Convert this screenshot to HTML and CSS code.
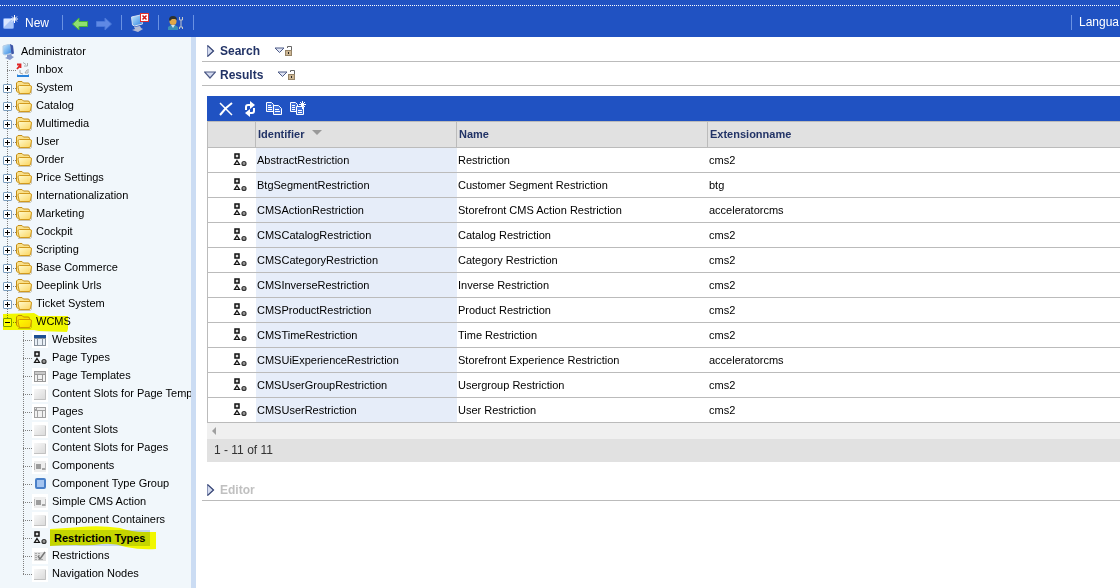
FILE: index.html
```html
<!DOCTYPE html>
<html lang="en">
  <head>
    <meta charset="UTF-8" />
    <meta name="viewport" content="width=device-width, initial-scale=1.0" />
    <title>Restriction Types</title>
    <link rel="stylesheet" href="styles.css">
  </head>
  <body>
    <!-- shared icons -->
    <svg class="sprite" aria-hidden="true">
      <defs>
        <linearGradient id="gold" x1="0" y1="0" x2="1" y2="1">
          <stop offset="0" stop-color="#fffbd0" />
          <stop offset="1" stop-color="#fbd45c" />
        </linearGradient>
        <linearGradient id="silver" x1="0" y1="0" x2="1" y2="1">
          <stop offset="0" stop-color="#f8f8f8" />
          <stop offset="1" stop-color="#d8d8d8" />
        </linearGradient>
        <linearGradient id="screen" x1="0" y1="0" x2="1" y2="1">
          <stop offset="0" stop-color="#c8ecff" />
          <stop offset="1" stop-color="#2b7fe0" />
        </linearGradient>
        <symbol id="folder" viewBox="0 0 16 16">
          <path d="M2 14.500h12.500l1-1V6" fill="none" stroke="#c9c4b4" />
          <path d="M.5 11V3l1.500-1.500h4L7.500 3H12q1.500 0 1.500 1.500V12l-1 1.500H3z" fill="#f9e08a" stroke="#c48d14" />
          <path d="M3.500 5.500H14q1.500 0 1.500 1.500l-1 5q0 1.500-1.500 1.500H4.500q-1.500 0-1.500-1.500l-1-5q0-1.500 1.500-1.500z" fill="url(#gold)" stroke="#d29a1c" />
        </symbol>
        <symbol id="types" viewBox="0 0 16 16">
          <rect x="3" y="2" width="4" height="4" fill="#ddd" stroke="#111" stroke-width="1.500" />
          <path d="M5 8.500L7.500 12.500h-5z" fill="#ddd" stroke="#111" stroke-width="1.200" />
          <circle cx="12" cy="11.500" r="2" fill="#999" stroke="#333" stroke-width="1.200" />
        </symbol>
        <symbol id="slot" viewBox="0 0 16 16">
          <rect width="16" height="16" fill="#fff" />
          <rect x="2" y="3" width="12" height="11" fill="url(#silver)" />
          <path d="M2 13.500h11.500V4" fill="none" stroke="#c2c2c2" />
        </symbol>
        <symbol id="website" viewBox="0 0 16 16">
          <rect width="16" height="16" fill="#fff" />
          <rect x="2" y="3" width="12" height="11" fill="#8b949e" />
          <rect x="2" y="3" width="12" height="3" fill="#1d4f93" />
          <path d="M3 7h2v6H3zM6 7h4v6H6zM11 7h2v6h-2z" fill="#eaf0f6" />
        </symbol>
        <symbol id="template" viewBox="0 0 16 16">
          <rect width="16" height="16" fill="#fff" />
          <rect x="2" y="3" width="12" height="11" fill="#9a9a9a" />
          <path d="M3 4h10v2H3z" fill="#c8c8c8" />
          <path d="M3 7h2v6H3zM6 7h4v4H6zM11 7h2v6h-2zM6 12h4v1H6z" fill="#f2f2f2" />
        </symbol>
        <symbol id="page" viewBox="0 0 16 16">
          <rect width="16" height="16" fill="#fff" />
          <rect x="2" y="3" width="12" height="11" fill="#a2a2a2" />
          <path d="M3 4h1v1H3zM5 4h8v2H5z" fill="#ececec" />
          <path d="M3 7h2v6H3zM6 7h4v6H6zM11 7h2v6h-2z" fill="#f2f2f2" />
        </symbol>
        <symbol id="component" viewBox="0 0 16 16">
          <rect width="16" height="16" fill="#fff" />
          <path d="M2 3h12v11H2z" fill="#eee" />
          <path d="M2.500 5v7M13.500 5v7" stroke="#bbb" />
          <path d="M4 6h5v5H4z" fill="#9c9c9c" />
          <path d="M10 10h3v2h-3z" fill="#a5a5a5" />
        </symbol>
        <symbol id="group" viewBox="0 0 16 16">
          <rect x="4" y="3" width="9" height="9" rx="1" fill="#a4c4f0" stroke="#4a80c8" stroke-width="2" />
        </symbol>
        <symbol id="rule" viewBox="0 0 16 16">
          <rect width="16" height="16" fill="#fff" />
          <rect x="2" y="4" width="12" height="9" fill="#e0e0e0" />
          <path d="M3 5.500h6M3 7.500h5M3 9.500h3M3 11.500h9" stroke="#aaa" stroke-dasharray="2 1" />
          <path d="M6 8l2 3 5-7" fill="none" stroke="#777" stroke-width="1.500" />
        </symbol>
        <symbol id="computer" viewBox="0 0 16 16">
          <path d="M2 2l7-2 2 9-7 2-2-1z" fill="url(#screen)" stroke="#b4cbe4" />
          <path d="M9 0l3 1.500 1 8-2.500 1z" fill="#3c55a8" />
          <path d="M6 11l4-1 1 2 2 1-4 3-5-2 2-1z" fill="#8298cc" />
        </symbol>
        <symbol id="right" viewBox="0 0 8 14">
          <path d="M.5 1.500v11L6.500 7z" fill="#d5dcf0" stroke="#8a95b8" />
          <path d="M.5 1.500L6.500 7l-6 5.500" fill="none" stroke="#3b4978" stroke-width="1.200" />
        </symbol>
        <symbol id="down" viewBox="0 0 12 8">
          <path d="M.5 1h11L6 7z" fill="#d5dcf0" stroke="#4d5a86" stroke-width="1.200" />
        </symbol>
        <symbol id="lock" viewBox="0 0 20 12">
          <path d="M1 3h9L5.500 7.500z" fill="#dfe4f4" stroke="#4d5a86" />
          <path d="M13.500 3V1.500h4v4" fill="none" stroke="#666" />
          <rect x="11.500" y="5.500" width="6" height="5" fill="#cdb794" stroke="#968468" />
          <path d="M14.500 7v2" stroke="#222" />
        </symbol>
      </defs>
    </svg>

    <header class="topbar">
      <button class="new" type="button">
        <svg width="16" height="16" viewBox="0 0 16 16" aria-hidden="true">
          <rect x="1.500" y="3.500" width="10" height="10" rx="1" fill="#a9c5f7" stroke="#7fa5f2" />
          <path d="M2 4h8L2 12z" fill="#dbe7ff" />
          <path d="M12.500 0v8M9 4h7M10 1.500l5 5M15 1.500l-5 5" stroke="#fff" />
        </svg>
        New
      </button>
      <span class="sep"></span>
      <button type="button" aria-label="Back">
        <svg width="16" height="16" viewBox="0 0 16 16" aria-hidden="true">
          <path d="M.5 9L7 3v3.500h8.500v5H7V15z" fill="#8fe070" stroke="#46b33a" />
        </svg>
      </button>
      <button type="button" aria-label="Forward">
        <svg width="16" height="16" viewBox="0 0 16 16" aria-hidden="true">
          <path d="M15.500 9L9 3v3.500H.5v5H9V15z" fill="#5f89e4" stroke="#4a78da" />
        </svg>
      </button>
      <span class="sep"></span>
      <button type="button" aria-label="Close session">
        <svg width="18" height="20" viewBox="1 0 18 20" aria-hidden="true">
          <path d="M1.500 4l9-2 2 9-8 2-2-1z" fill="url(#screen)" stroke="#d5dfef" />
          <path d="M4 14l6-1 1 2 2 1-5 3-6-2 3-1z" fill="#b4bbd4" />
          <rect x="10.500" y=".5" width="8" height="8" fill="#fff" stroke="#e03030" />
          <path d="M12.500 2.500l4 4M16.500 2.500l-4 4" stroke="#d01818" stroke-width="1.500" />
        </svg>
      </button>
      <span class="sep"></span>
      <button type="button" aria-label="User settings">
        <svg width="16" height="18" viewBox="0 0 16 18" aria-hidden="true">
          <path d="M0 16v-3l3-2h4l3 2v3z" fill="#3a8fb8" />
          <path d="M3 11l2 3 2-3z" fill="#cfe4ee" />
          <circle cx="5" cy="7.500" r="3.500" fill="#e0a848" />
          <path d="M1 6q0-4 4-4t4 4L7 5H4L2 7z" fill="#2b3130" />
          <path d="M11.500 3v3h3V3M13 6v7M11.500 15v-2h3v2" fill="none" stroke="#c4c8ca" />
        </svg>
      </button>
      <span class="sep"></span>
      <div class="language">Langua</div>
    </header>

    <div class="layout">
      <nav class="sidebar">
        <ul class="tree">
          <li class="root"><svg class="icon"><use href="#computer" /></svg><a href="#">Administrator</a></li>
          <li class="row">
            <span class="branch"></span>
            <svg class="icon" viewBox="0 0 16 16">
              <path d="M1 12v3h12v-3l-1 1H2z" fill="#2a84dc" />
              <path d="M1 7l3-3.500M1 2.500h3.500V6" fill="none" stroke="#df2525" stroke-width="1.800" />
              <path d="M7 .5l3 2M11.500 1v3H8M4 8v3l3 1M12 7v4H9l2-3" fill="none" stroke="#aaa" />
            </svg>
            <a href="#">Inbox</a>
          </li>
          <li class="row"><span class="branch"><button class="toggle plus" aria-label="Open System"></button></span><svg class="icon"><use href="#folder" /></svg><a href="#">System</a></li>
          <li class="row"><span class="branch"><button class="toggle plus" aria-label="Open Catalog"></button></span><svg class="icon"><use href="#folder" /></svg><a href="#">Catalog</a></li>
          <li class="row"><span class="branch"><button class="toggle plus" aria-label="Open Multimedia"></button></span><svg class="icon"><use href="#folder" /></svg><a href="#">Multimedia</a></li>
          <li class="row"><span class="branch"><button class="toggle plus" aria-label="Open User"></button></span><svg class="icon"><use href="#folder" /></svg><a href="#">User</a></li>
          <li class="row"><span class="branch"><button class="toggle plus" aria-label="Open Order"></button></span><svg class="icon"><use href="#folder" /></svg><a href="#">Order</a></li>
          <li class="row"><span class="branch"><button class="toggle plus" aria-label="Open Price Settings"></button></span><svg class="icon"><use href="#folder" /></svg><a href="#">Price Settings</a></li>
          <li class="row"><span class="branch"><button class="toggle plus" aria-label="Open Internationalization"></button></span><svg class="icon"><use href="#folder" /></svg><a href="#">Internationalization</a></li>
          <li class="row"><span class="branch"><button class="toggle plus" aria-label="Open Marketing"></button></span><svg class="icon"><use href="#folder" /></svg><a href="#">Marketing</a></li>
          <li class="row"><span class="branch"><button class="toggle plus" aria-label="Open Cockpit"></button></span><svg class="icon"><use href="#folder" /></svg><a href="#">Cockpit</a></li>
          <li class="row"><span class="branch"><button class="toggle plus" aria-label="Open Scripting"></button></span><svg class="icon"><use href="#folder" /></svg><a href="#">Scripting</a></li>
          <li class="row"><span class="branch"><button class="toggle plus" aria-label="Open Base Commerce"></button></span><svg class="icon"><use href="#folder" /></svg><a href="#">Base Commerce</a></li>
          <li class="row"><span class="branch"><button class="toggle plus" aria-label="Open Deeplink Urls"></button></span><svg class="icon"><use href="#folder" /></svg><a href="#">Deeplink Urls</a></li>
          <li class="row"><span class="branch"><button class="toggle plus" aria-label="Open Ticket System"></button></span><svg class="icon"><use href="#folder" /></svg><a href="#">Ticket System</a></li>
          <li>
            <div class="row">
              <span class="branch last"><button class="toggle" aria-label="Close WCMS"></button></span><svg class="icon"><use href="#folder" /></svg><a href="#">WCMS</a>
              <svg class="marker marker-wcms" viewBox="0 0 66 20" aria-hidden="true"><path d="M0 1l31-1 5 3h29v13l-1 3-28-1-5-1H0z" fill="#ff0" /></svg>
            </div>
            <ul class="tree sub">
              <li class="row"><span class="branch"></span><svg class="icon"><use href="#website" /></svg><a href="#">Websites</a></li>
              <li class="row"><span class="branch"></span><svg class="icon"><use href="#types" /></svg><a href="#">Page Types</a></li>
              <li class="row"><span class="branch"></span><svg class="icon"><use href="#template" /></svg><a href="#">Page Templates</a></li>
              <li class="row"><span class="branch"></span><svg class="icon"><use href="#slot" /></svg><a href="#">Content Slots for Page Temp</a></li>
              <li class="row"><span class="branch"></span><svg class="icon"><use href="#page" /></svg><a href="#">Pages</a></li>
              <li class="row"><span class="branch"></span><svg class="icon"><use href="#slot" /></svg><a href="#">Content Slots</a></li>
              <li class="row"><span class="branch"></span><svg class="icon"><use href="#slot" /></svg><a href="#">Content Slots for Pages</a></li>
              <li class="row"><span class="branch"></span><svg class="icon"><use href="#component" /></svg><a href="#">Components</a></li>
              <li class="row"><span class="branch"></span><svg class="icon"><use href="#group" /></svg><a href="#">Component Type Group</a></li>
              <li class="row"><span class="branch"></span><svg class="icon"><use href="#component" /></svg><a href="#">Simple CMS Action</a></li>
              <li class="row"><span class="branch"></span><svg class="icon"><use href="#slot" /></svg><a href="#">Component Containers</a></li>
              <li class="row">
                <span class="branch"></span><svg class="icon"><use href="#types" /></svg><a class="selected" href="#">Restriction Types</a>
                <svg class="marker marker-types" viewBox="0 0 106 24" aria-hidden="true"><path d="M0 3q18-1 30-2 20-2 40 1 12 4 24 4h12v17q-15 1-30-2-12-4-24-3-12 2-26 1-14 0-26 1z" fill="#ff0" /></svg>
              </li>
              <li class="row"><span class="branch"></span><svg class="icon"><use href="#rule" /></svg><a href="#">Restrictions</a></li>
              <li class="row"><span class="branch last"></span><svg class="icon"><use href="#slot" /></svg><a href="#">Navigation Nodes</a></li>
            </ul>
          </li>
        </ul>
      </nav>

      <main class="content">
        <h2 class="section">
          <svg class="arrow" width="16" height="14"><use href="#right" width="8" height="14" x="5" /></svg>Search
          <svg class="lock" width="20" height="12"><use href="#lock" /></svg>
        </h2>
        <h2 class="section">
          <svg class="arrow" width="16" height="14"><use href="#down" width="12" height="8" x="2" y="3" /></svg>Results
          <svg class="lock" width="20" height="12"><use href="#lock" /></svg>
        </h2>

        <div class="results">
          <div class="actions">
            <button type="button" aria-label="Delete">
              <svg width="16" height="16" viewBox="0 0 16 16"><path d="M2 2l6 6 6 6" fill="none" stroke="#fff" stroke-width="1.500" /><path d="M14 2L8 7l-6 7" fill="none" stroke="#fff" stroke-width="2" /></svg>
            </button>
            <button type="button" aria-label="Refresh">
              <svg width="16" height="16" viewBox="0 0 16 16"><path d="M4 9V6q0-2 2-2h3M12 7v3q0 2-2 2H7" fill="none" stroke="#fff" stroke-width="2" /><path d="M8 0l5 4-5 4zM8 8l-5 4 5 4z" fill="#fff" /></svg>
            </button>
            <button type="button" aria-label="Copy">
              <svg width="16" height="16" viewBox="0 0 16 16"><g fill="#3f6fd8" stroke="#fff"><path d="M.5 1.500h5l2 2v7h-7z" /><path d="M7.500 4.500h5l3 3v6h-8z" /><path d="M2 4.500h3M2 6.500h4M2 8.500h4M9 8.500h4M9 10.500h5" /></g></svg>
            </button>
            <button type="button" aria-label="Copy as new">
              <svg width="16" height="16" viewBox="0 0 16 16"><g fill="#3f6fd8" stroke="#fff"><path d="M.5 1.500h5l2 2v7h-7z" /><path d="M6.500 5.500h7v8h-7z" /><path d="M2 4.500h3M2 6.500h3M2 8.500h3M8 9.500h4M8 11.500h4M12.500 0v8M9 3.500h7M10 1l5 5M15 1l-5 5" /></g></svg>
            </button>
          </div>
          <table class="grid">
            <thead>
              <tr>
                <th class="col-icon"></th>
                <th class="col-id">Identifier <span class="sort"></span></th>
                <th class="col-name">Name</th>
                <th>Extensionname</th>
              </tr>
            </thead>
            <tbody>
              <tr><td><svg class="icon"><use href="#types" /></svg></td><td>AbstractRestriction</td><td>Restriction</td><td>cms2</td></tr>
              <tr><td><svg class="icon"><use href="#types" /></svg></td><td>BtgSegmentRestriction</td><td>Customer Segment Restriction</td><td>btg</td></tr>
              <tr><td><svg class="icon"><use href="#types" /></svg></td><td>CMSActionRestriction</td><td>Storefront CMS Action Restriction</td><td>acceleratorcms</td></tr>
              <tr><td><svg class="icon"><use href="#types" /></svg></td><td>CMSCatalogRestriction</td><td>Catalog Restriction</td><td>cms2</td></tr>
              <tr><td><svg class="icon"><use href="#types" /></svg></td><td>CMSCategoryRestriction</td><td>Category Restriction</td><td>cms2</td></tr>
              <tr><td><svg class="icon"><use href="#types" /></svg></td><td>CMSInverseRestriction</td><td>Inverse Restriction</td><td>cms2</td></tr>
              <tr><td><svg class="icon"><use href="#types" /></svg></td><td>CMSProductRestriction</td><td>Product Restriction</td><td>cms2</td></tr>
              <tr><td><svg class="icon"><use href="#types" /></svg></td><td>CMSTimeRestriction</td><td>Time Restriction</td><td>cms2</td></tr>
              <tr><td><svg class="icon"><use href="#types" /></svg></td><td>CMSUiExperienceRestriction</td><td>Storefront Experience Restriction</td><td>acceleratorcms</td></tr>
              <tr><td><svg class="icon"><use href="#types" /></svg></td><td>CMSUserGroupRestriction</td><td>Usergroup Restriction</td><td>cms2</td></tr>
              <tr><td><svg class="icon"><use href="#types" /></svg></td><td>CMSUserRestriction</td><td>User Restriction</td><td>cms2</td></tr>
            </tbody>
          </table>
          <div class="scrollbar"><span class="scroll-left"></span></div>
          <div class="count">1 - 11 of 11</div>
        </div>

        <h2 class="section disabled">
          <svg class="arrow" width="16" height="14"><use href="#right" width="8" height="14" x="5" /></svg>Editor
        </h2>
      </main>
    </div>
  </body>
</html>
```

FILE: styles.css
```css
* {
  box-sizing: border-box;
}
body {
  margin: 0;
  min-height: 100vh;
  display: flex;
  flex-direction: column;
  overflow: hidden;
  background-color: #fff;
  font-family: "Liberation Sans", Arial, sans-serif;
  font-size: 11px;
  color: #000;
}
a {
  color: inherit;
  text-decoration: none;
}
button {
  display: flex;
  align-items: center;
  padding: 0;
  border: 0;
  background: none;
  font: inherit;
  color: inherit;
}
svg {
  display: block;
  flex: none;
}
.sprite {
  position: absolute;
  width: 0;
  height: 0;
}
.icon {
  width: 16px;
  height: 16px;
}

/* top bar */
.topbar {
  display: flex;
  align-items: center;
  gap: 8px;
  height: 37px;
  padding: 8px 0 0 2px;
  background: repeating-linear-gradient(90deg, #fff 0 1px, #2052c2 1px 2px) 0 5px / 100% 1px no-repeat #2052c2;
  color: #fff;
  font-size: 12px;
}
.new {
  gap: 7px;
  margin-right: 4px;
}
.sep {
  width: 1px;
  height: 15px;
  margin: 0 1px 0 1px;
  background-color: #6a92e2;
}
.language {
  width: 49px;
  margin-left: auto;
  padding-left: 7px;
  border-left: 1px solid #6a92e2;
  line-height: 15px;
  white-space: nowrap;
}

/* navigation tree */
.layout {
  display: flex;
  flex: 1;
}
.sidebar {
  flex: none;
  width: 196px;
  padding-top: 6px;
  border-right: 5px solid #cbdcf3;
  background-color: #f1f7fb;
}
.tree {
  margin: 0;
  padding: 0;
  list-style: none;
  overflow: hidden;
}
.sub {
  padding-left: 16px;
}
.root,
.row {
  position: relative;
  display: flex;
  align-items: center;
  height: 18px;
  white-space: nowrap;
}
.root a,
.row a {
  margin-left: 4px;
  padding-bottom: 2px;
  line-height: 16px;
}
.root {
  padding-left: 1px;
}
.branch {
  display: flex;
  flex: none;
  align-items: center;
  width: 16px;
  height: 18px;
  padding-left: 3px;
  background:
    repeating-linear-gradient(#808080 0 1px, transparent 1px 2px) 7px 0 / 1px 100% no-repeat,
    repeating-linear-gradient(90deg, #808080 0 1px, transparent 1px 2px) 7px 9px / 9px 1px no-repeat;
}
.last {
  background-size: 1px 9px, 9px 1px;
}
.toggle {
  width: 9px;
  height: 9px;
  border: 1px solid #7b9ebd;
  border-radius: 1px;
  background:
    linear-gradient(#000, #000) 1px 3px / 5px 1px no-repeat,
    #fff;
}
.plus {
  background:
    linear-gradient(#000, #000) 1px 3px / 5px 1px no-repeat,
    linear-gradient(#000, #000) 3px 1px / 1px 5px no-repeat,
    #fff;
}
.row .selected {
  margin-left: 2px;
  padding: 0 4px 0 4px;
  background-color: #c5d5ee;
  font-size: 11px;
  font-weight: bold;
}

/* highlighter strokes over the tree */
.marker {
  position: absolute;
  mix-blend-mode: multiply;
  pointer-events: none;
}
.marker-wcms {
  top: 0;
  left: 3px;
  width: 66px;
  height: 20px;
}
.marker-types {
  top: -3px;
  left: 34px;
  width: 106px;
  height: 24px;
}

/* content */
.content {
  flex: 1;
  min-width: 0;
  padding: 1px 0 0 6px;
}
.section {
  display: flex;
  align-items: center;
  height: 24px;
  margin: 0;
  padding-top: 2px;
  border-bottom: 1px solid #bbb;
  font-size: 12px;
  color: #223366;
}
.arrow {
  margin-right: 2px;
}
.lock {
  margin-left: 14px;
}
.disabled {
  color: #c0c0c0;
}
.results {
  margin: 10px 0 15px 5px;
}
.actions {
  display: flex;
  align-items: center;
  gap: 8px;
  height: 25px;
  padding-left: 11px;
  background-color: #2052c2;
}
.grid {
  width: 100%;
  table-layout: fixed;
  border-collapse: separate;
  border-spacing: 0;
  border-top: 1px solid #bbb;
  border-left: 1px solid #bbb;
}
.grid th {
  height: 26px;
  padding: 0 2px 2px;
  border-right: 1px solid #bbb;
  border-bottom: 1px solid #bbb;
  background-color: #e1e1e1;
  color: #223366;
  text-align: left;
}
.grid th:last-child {
  border-right: 0;
}
.grid td {
  height: 25px;
  padding: 0 1px;
  border-bottom: 1px solid #bbb;
}
.grid td:first-child {
  padding-left: 24px;
}
.grid td:nth-child(2) {
  background-color: #e6edf9;
}
.grid .col-icon {
  width: 48px;
}
.grid .col-id {
  width: 201px;
}
.grid .col-name {
  width: 251px;
}
.sort {
  display: inline-block;
  margin-left: 4px;
  border: 5px solid transparent;
  border-top-color: #999;
  border-bottom: 0;
  vertical-align: 3px;
}
.scrollbar {
  display: flex;
  align-items: center;
  height: 16px;
  padding-left: 5px;
  background-color: #f0f0f0;
}
.scroll-left {
  border: 4px solid transparent;
  border-right-color: #a0a0a0;
  border-left: 0;
}
.count {
  height: 23px;
  padding-left: 7px;
  background-color: #e1e1e1;
  color: #333;
  font-size: 12px;
  line-height: 23px;
}
```
